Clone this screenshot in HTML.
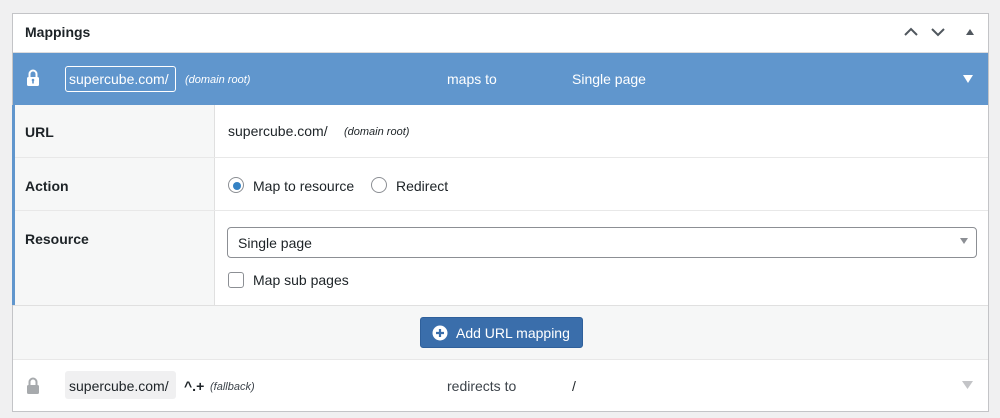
<!DOCTYPE html>
<html><head><style>
*{box-sizing:border-box;margin:0;padding:0}
body{width:1000px;height:418px;background:#f0f0f1;font-family:"Liberation Sans",Arial,sans-serif;font-size:14px;color:#1d2327;position:relative;overflow:hidden}
.a{position:absolute}
.box{left:12px;top:13px;width:977px;height:399px;background:#fff;border:1px solid #c3c4c7}
</style></head><body>
<div class="a box"></div>
<div class="a" style="left:25px;top:24px;font-size:14px;font-weight:bold">Mappings</div>
<svg class="a" style="left:903px;top:26px" width="16" height="12"><path d="M2 9 L8 3 L14 9" stroke="#50575e" stroke-width="2" fill="none"/></svg>
<svg class="a" style="left:930px;top:26px" width="16" height="12"><path d="M2 3 L8 9 L14 3" stroke="#50575e" stroke-width="2" fill="none"/></svg>
<svg class="a" style="left:965px;top:28px" width="10" height="8"><path d="M1 7 L5 1 L9 7Z" fill="#50575e"/></svg>
<div class="a" style="left:13px;top:52px;width:975px;height:1px;background:#dcdcde"></div>
<div class="a" style="left:13px;top:53px;width:975px;height:52px;background:#6096cd"></div>
<svg class="a" style="left:26px;top:69px" width="14" height="18"><path d="M3.5 8 V5 A3.5 3.5 0 0 1 10.5 5 V8" stroke="#fff" stroke-width="2" fill="none"/><rect x="1" y="8" width="12" height="9" rx="1.5" fill="#fff"/><rect x="6.2" y="10.5" width="1.6" height="4" fill="#6096cd"/><circle cx="7" cy="11" r="1.3" fill="#6096cd"/></svg>
<div class="a" style="left:65px;top:66px;width:111px;height:26px;border:1px solid #fff;border-radius:3px"></div>
<div class="a" style="left:69px;top:71px;color:#fff;font-size:14px">supercube.com/</div>
<div class="a" style="left:185px;top:74px;color:#fff;font-size:11px;font-style:italic">(domain root)</div>
<div class="a" style="left:447px;top:71px;color:#fff">maps to</div>
<div class="a" style="left:572px;top:71px;color:#fff">Single page</div>
<svg class="a" style="left:962px;top:74px" width="12" height="10"><path d="M1 1 L11 1 L6 9Z" fill="#fff"/></svg>
<div class="a" style="left:12px;top:105px;width:3px;height:200px;background:#6096cd"></div>
<div class="a" style="left:15px;top:105px;width:199px;height:200px;background:#f6f7f7"></div>
<div class="a" style="left:214px;top:105px;width:1px;height:200px;background:#e0e0e0"></div>
<div class="a" style="left:15px;top:157px;width:973px;height:1px;background:#e8e8e8"></div>
<div class="a" style="left:15px;top:210px;width:973px;height:1px;background:#e8e8e8"></div>
<div class="a" style="left:25px;top:124px;font-weight:bold">URL</div>
<div class="a" style="left:25px;top:178px;font-weight:bold">Action</div>
<div class="a" style="left:25px;top:231px;font-weight:bold">Resource</div>
<div class="a" style="left:228px;top:123px">supercube.com/</div>
<div class="a" style="left:344px;top:126px;font-size:11px;font-style:italic">(domain root)</div>
<div class="a" style="left:228px;top:177px;width:16px;height:16px;border:1px solid #8c8f94;border-radius:50%"></div>
<div class="a" style="left:233px;top:182px;width:8px;height:8px;background:#3582c4;border-radius:50%"></div>
<div class="a" style="left:253px;top:178px">Map to resource</div>
<div class="a" style="left:371px;top:177px;width:16px;height:16px;border:1px solid #8c8f94;border-radius:50%"></div>
<div class="a" style="left:396px;top:178px">Redirect</div>
<div class="a" style="left:227px;top:227px;width:750px;height:31px;border:1px solid #8c8f94;border-radius:4px"></div>
<div class="a" style="left:238px;top:235px">Single page</div>
<svg class="a" style="left:960px;top:238px" width="8" height="7"><path d="M0 0 L8 0 L4 6Z" fill="#8c8f94"/></svg>
<div class="a" style="left:228px;top:272px;width:16px;height:16px;border:1px solid #8c8f94;border-radius:3px"></div>
<div class="a" style="left:253px;top:272px">Map sub pages</div>
<div class="a" style="left:13px;top:305px;width:975px;height:55px;background:#f6f7f7;border-top:1px solid #e0e0e0;border-bottom:1px solid #e8e8e8"></div>
<div class="a" style="left:420px;top:317px;width:163px;height:31px;background:#3a6eab;border:1px solid #2f609b;border-radius:3px"></div>
<svg class="a" style="left:432px;top:325px" width="16" height="16"><circle cx="8" cy="8" r="7.5" fill="#fff"/><path d="M8 4 V12 M4 8 H12" stroke="#3a6eab" stroke-width="2.2"/></svg>
<div class="a" style="left:456px;top:325px;color:#fff">Add URL mapping</div>
<svg class="a" style="left:26px;top:377px" width="14" height="18"><path d="M3.5 8 V5 A3.5 3.5 0 0 1 10.5 5 V8" stroke="#a7aaad" stroke-width="2" fill="none"/><rect x="1" y="8" width="12" height="9" rx="1.5" fill="#a7aaad"/></svg>
<div class="a" style="left:65px;top:371px;width:111px;height:28px;background:#f0f0f1;border-radius:3px"></div>
<div class="a" style="left:69px;top:378px">supercube.com/</div>
<div class="a" style="left:184px;top:378px;font-weight:bold">^.+</div>
<div class="a" style="left:210px;top:381px;font-size:11px;font-style:italic;color:#3c434a">(fallback)</div>
<div class="a" style="left:447px;top:378px;color:#3c434a">redirects to</div>
<div class="a" style="left:572px;top:378px">/</div>
<svg class="a" style="left:962px;top:381px" width="11" height="9"><path d="M0 0 L11 0 L5.5 8Z" fill="#c3c4c7"/></svg>
</body></html>
